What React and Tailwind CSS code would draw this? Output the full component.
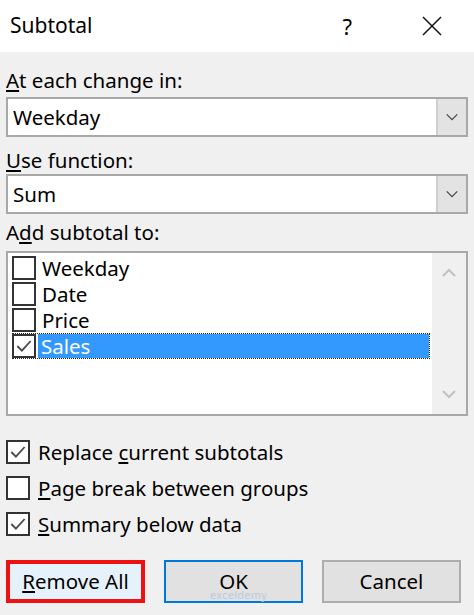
import React from 'react'

const font = { fontFamily: '"Noto Sans", "Open Sans", sans-serif' }

function Check({ className = '' }) {
  return (
    <svg viewBox="0 0 24 24" className={className}>
      <polyline points="4,12 9.5,17.5 20,6" fill="none" stroke="#4a4a4a" strokeWidth="2.2" />
    </svg>
  )
}

function Box({ checked }) {
  return (
    <span className="w-[24px] h-[24px] border-2 border-[#333] bg-white flex items-center justify-center shrink-0">
      {checked && <Check className="w-[20px] h-[20px]" />}
    </span>
  )
}

function Combo({ value }) {
  return (
    <div className="h-[40px] flex border-2 border-[#a8a8a8] bg-white">
      <div className="flex-1 flex items-center pl-[5px] text-[20.5px] text-black">{value}</div>
      <div className="w-[30px] bg-[#e3e3e3] border-l-2 border-[#cfcfcf] flex items-center justify-center">
        <svg viewBox="0 0 16 16" className="w-[14px] h-[14px]">
          <polyline points="2,5 8,11 14,5" fill="none" stroke="#444" strokeWidth="1.4" />
        </svg>
      </div>
    </div>
  )
}

function Option({ checked, children }) {
  return (
    <div className="h-[36px] flex items-center gap-[8px]">
      <Box checked={checked} />
      <span className="text-[20.5px] text-black">{children}</span>
    </div>
  )
}

export default function App() {
  const fields = ['Weekday', 'Date', 'Price']
  return (
    <div className="w-[474px] h-[615px] bg-[#f0f0f0] flex flex-col overflow-hidden" style={font}>
      {/* Title bar */}
      <div className="h-[52px] bg-white flex items-center shrink-0">
        <span className="ml-[10px] text-[21px] text-black flex-1">Subtotal</span>
        <span className="text-[22px] text-black mr-[70px]">?</span>
        <svg viewBox="0 0 20 20" className="w-[20px] h-[20px] mr-[32px]">
          <path d="M1 1 L19 19 M19 1 L1 19" stroke="#111" strokeWidth="1.5" />
        </svg>
      </div>

      <div className="px-[6px] flex flex-col">
        <div className="mt-[16px] h-[24px] leading-[24px] text-[20.5px] text-black">
          <u>A</u>t each change in:
        </div>
        <div className="mt-[5px]"><Combo value="Weekday" /></div>

        <div className="mt-[11px] h-[24px] leading-[24px] text-[20.5px] text-black">
          <u>U</u>se function:
        </div>
        <div className="mt-[2px]"><Combo value="Sum" /></div>

        <div className="mt-[6px] h-[24px] leading-[24px] text-[20.5px] text-black">
          A<u>d</u>d subtotal to:
        </div>

        {/* List box */}
        <div className="mt-[7px] h-[165px] border-2 border-[#a8a8a8] bg-white flex">
          <div className="flex-1 pt-[2px] pl-[4px] pr-[2px] flex flex-col">
            {fields.map(f => (
              <div key={f} className="h-[26px] flex items-center gap-[6px]">
                <Box />
                <span className="text-[20.5px] text-black">{f}</span>
              </div>
            ))}
            <div className="h-[26px] flex items-center border border-dotted border-[#222]">
              <span className="w-[24px] h-[24px] border-2 border-[#333] bg-white flex items-center justify-center shrink-0 -ml-px">
                <Check className="w-[20px] h-[20px]" />
              </span>
              <span className="flex-1 h-full ml-[2px] bg-[#3399ff] flex items-center pl-[3px] text-[20.5px] text-white">Sales</span>
            </div>
          </div>
          <div className="w-[34px] bg-[#f0f0f0] flex flex-col items-center justify-between py-[12px]">
            <svg viewBox="0 0 16 16" className="w-[16px] h-[16px]">
              <polyline points="2,11 8,5 14,11" fill="none" stroke="#c2c2c2" strokeWidth="2" />
            </svg>
            <svg viewBox="0 0 16 16" className="w-[16px] h-[16px]">
              <polyline points="2,5 8,11 14,5" fill="none" stroke="#c2c2c2" strokeWidth="2" />
            </svg>
          </div>
        </div>

        <div className="mt-[18px] flex flex-col">
          <Option checked>Replace <u>c</u>urrent subtotals</Option>
          <Option><u>P</u>age break between groups</Option>
          <Option checked><u>S</u>ummary below data</Option>
        </div>

        {/* Buttons */}
        <div className="mt-[18px] flex gap-[19px]">
          <button className="w-[139px] h-[43px] border-[4px] border-[#ee1111] bg-[#e5f1fb] text-[20.5px] text-black">
            <u>R</u>emove All
          </button>
          <button className="relative w-[139px] h-[43px] border-2 border-[#0078d7] bg-[#e1e1e1] text-[20.5px] text-black">
            OK
            <span className="absolute left-[44px] top-[27px] text-[11px] leading-none text-[#bccadb] tracking-wide">exceldemy</span>
          </button>
          <button className="w-[139px] h-[43px] border-2 border-[#adadad] bg-[#e1e1e1] text-[20.5px] text-black">
            Cancel
          </button>
        </div>
      </div>
    </div>
  )
}
